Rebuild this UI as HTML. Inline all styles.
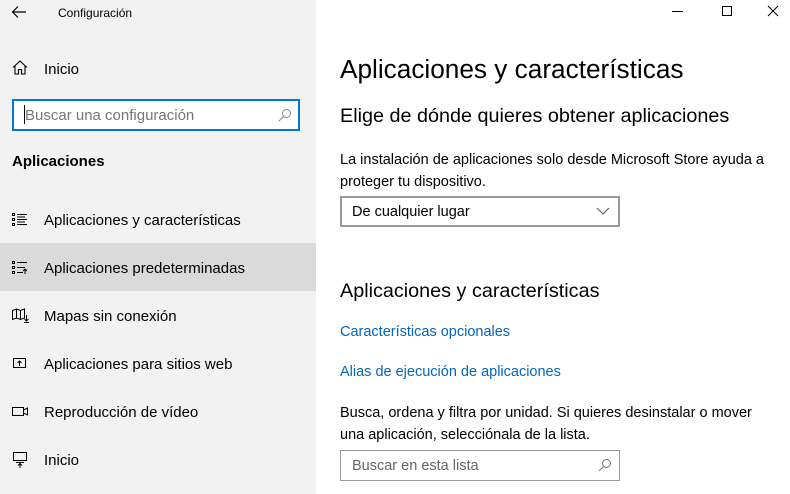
<!DOCTYPE html>
<html><head><meta charset="utf-8"><style>
*{margin:0;padding:0;box-sizing:border-box}
body{width:790px;height:494px;overflow:hidden;font-family:"Liberation Sans",sans-serif;background:#fff;position:relative;color:#000}
.side{position:absolute;left:0;top:0;width:316px;height:494px;background:#f2f2f2}
.a{position:absolute;white-space:nowrap}
.nav{position:absolute;left:0;width:316px;height:48px}
.nav span{position:absolute;left:44px;top:17px;font-size:15px}
.nav svg{position:absolute;left:12px;top:16px}
.sel{background:#dadada}
</style></head><body>
<div class="side">
<svg class="a" style="left:11px;top:5px" width="16" height="14" viewBox="0 0 16 14"><path d="M15 7H2M7 1.5L1.5 7 7 12.5" stroke="#000" stroke-width="1.2" fill="none"/></svg>
<div class="a" style="left:58px;top:6px;font-size:12px">Configuración</div>
<svg class="a" style="left:12px;top:60px" width="16" height="15" viewBox="0 0 16 15"><path d="M1 7.5L8 1l7 6.5M3 6v8h3.5V9.5h3V14H13V6" stroke="#000" stroke-width="1.1" fill="none"/></svg>
<div class="a" style="left:44px;top:61px;font-size:15px">Inicio</div>
<div class="a" style="left:12px;top:99px;width:288px;height:32px;border:2px solid #0078d7;background:#fff"></div>
<div class="a" style="left:24px;top:105px;width:1px;height:19px;background:#000"></div>
<div class="a" style="left:25px;top:107px;font-size:15px;color:#777">Buscar una configuración</div>
<svg class="a" style="left:278px;top:108px" width="14" height="14" viewBox="0 0 14 14"><circle cx="8.5" cy="5.5" r="4" stroke="#888" fill="none"/><path d="M5.5 8.5L1 13" stroke="#888"/></svg>
<div class="a" style="left:12px;top:153px;font-size:15px;font-weight:bold">Aplicaciones</div>
<div class="nav" style="top:195px"><svg width="16" height="16" viewBox="0 0 16 16" fill="none" stroke="#000"><rect x="0.5" y="2.5" width="2" height="2"/><rect x="0.5" y="7.5" width="2" height="2"/><rect x="0.5" y="12.5" width="2" height="2"/><path d="M5 3.5h10M5 8.5h10M5 13.5h10M5 6h8M5 11h8"/></svg><span>Aplicaciones y características</span></div>
<div class="nav sel" style="top:243px"><svg width="16" height="16" viewBox="0 0 16 16" fill="none" stroke="#000"><rect x="0.5" y="2.5" width="2" height="2"/><rect x="0.5" y="7.5" width="2" height="2"/><rect x="0.5" y="12.5" width="2" height="2"/><path d="M5 3.5h10M5 8.5h8M5 13.5h6M13 15v-5M11 12l2-2 2 2"/></svg><span>Aplicaciones predeterminadas</span></div>
<div class="nav" style="top:291px"><svg width="18" height="16" viewBox="0 0 18 16" fill="none" stroke="#000"><path d="M0.5 3.5l4-1.5 4 1.5 4-1.5v9l-4 1.5-4-1.5-4 1.5zM4.5 2v9M8.5 3.5v9M14.5 8v6M12.5 12l2 2 2-2M12 15.5h5"/></svg><span>Mapas sin conexión</span></div>
<div class="nav" style="top:339px"><svg width="16" height="16" viewBox="0 0 16 16" fill="none" stroke="#000"><rect x="1.5" y="3.5" width="12" height="9"/><path d="M7.5 11V6M5.5 8l2-2 2 2"/></svg><span>Aplicaciones para sitios web</span></div>
<div class="nav" style="top:387px"><svg width="18" height="16" viewBox="0 0 18 16" fill="none" stroke="#000"><rect x="0.5" y="4.5" width="11" height="8"/><path d="M11.5 7l4-2v7l-4-2"/></svg><span>Reproducción de vídeo</span></div>
<div class="nav" style="top:435px"><svg width="16" height="18" viewBox="0 0 16 18" fill="none" stroke="#000"><rect x="1.5" y="1.5" width="13" height="8"/><path d="M4 11.5h8M8 17v-4M6 14.5l2-2 2 2"/></svg><span>Inicio</span></div>
</div>
<div class="a" style="left:672px;top:11px;width:11px;height:1px;background:#000"></div>
<div class="a" style="left:722px;top:6px;width:10px;height:10px;border:1px solid #000"></div>
<svg class="a" style="left:767px;top:5px" width="12" height="12" viewBox="0 0 12 12"><path d="M1 1l10 10M11 1L1 11" stroke="#000"/></svg>
<div class="a" style="left:340px;top:54px;font-size:26.2px;font-weight:300">Aplicaciones y características</div>
<div class="a" style="left:340px;top:105px;font-size:19.8px">Elige de dónde quieres obtener aplicaciones</div>
<div class="a" style="left:340px;top:150px;font-size:14.5px;line-height:21.5px">La instalación de aplicaciones solo desde Microsoft Store ayuda a<br>proteger tu dispositivo.</div>
<div class="a" style="left:340px;top:196px;width:280px;height:31px;border:2px solid #999"></div>
<div class="a" style="left:352px;top:204px;font-size:14.5px">De cualquier lugar</div>
<svg class="a" style="left:596px;top:207px" width="14" height="8" viewBox="0 0 14 8"><path d="M1 1l6 6 6-6" stroke="#555" fill="none"/></svg>
<div class="a" style="left:340px;top:280px;font-size:19.8px">Aplicaciones y características</div>
<div class="a" style="left:340px;top:324px;font-size:14.5px;color:#0067c0">Características opcionales</div>
<div class="a" style="left:340px;top:364px;font-size:14.5px;color:#0067c0">Alias de ejecución de aplicaciones</div>
<div class="a" style="left:340px;top:402px;font-size:14.5px;line-height:22px">Busca, ordena y filtra por unidad. Si quieres desinstalar o mover<br>una aplicación, selecciónala de la lista.</div>
<div class="a" style="left:340px;top:450px;width:280px;height:31px;border:1px solid #999"></div>
<div class="a" style="left:352px;top:458px;font-size:14.5px;color:#666">Buscar en esta lista</div>
<svg class="a" style="left:598px;top:458px" width="14" height="14" viewBox="0 0 14 14"><circle cx="8.5" cy="5.5" r="4" stroke="#777" fill="none"/><path d="M5.5 8.5L1 13" stroke="#777"/></svg>
</body></html>
